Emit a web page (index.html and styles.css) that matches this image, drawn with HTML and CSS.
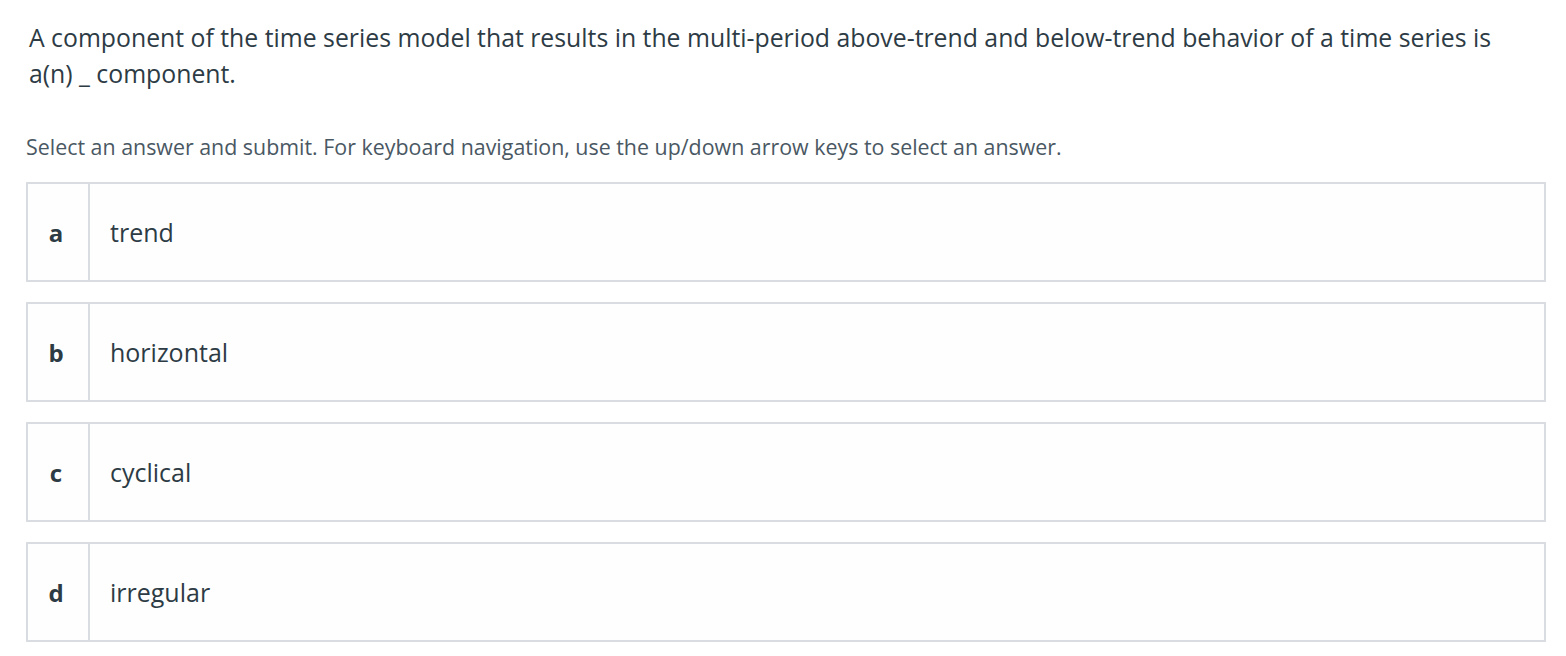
FILE: index.html
```html
<!DOCTYPE html>
<html lang="en">
<head>
<meta charset="utf-8">
<title>Question</title>
<link rel="stylesheet" href="styles.css">
</head>
<body>
<main class="quiz">
  <p class="question">A component of the time series model that results in the multi-period above-trend and below-trend behavior of a time series is a(n) _ component.</p>
  <p class="instructions">Select an answer and submit. For keyboard navigation, use the up/down arrow keys to select an answer.</p>
  <ul class="options">
    <li class="option"><span class="letter">a</span><span class="text">trend</span></li>
    <li class="option"><span class="letter">b</span><span class="text">horizontal</span></li>
    <li class="option"><span class="letter">c</span><span class="text">cyclical</span></li>
    <li class="option"><span class="letter">d</span><span class="text">irregular</span></li>
  </ul>
</main>
</body>
</html>
```
FILE: styles.css
```css
html, body {
  margin: 0;
  padding: 0;
  background: #ffffff;
}
body {
  font-family: "Open Sans", "Noto Sans", sans-serif;
  color: #2d3b45;
}
.quiz {
  padding: 19px 20px 0 26px;
}
.question {
  margin: 0 0 0 3px;
  font-size: 24.8px;
  line-height: 36px;
  max-width: 1480px;
}
.instructions {
  margin: 42px 0 0 0;
  font-size: 21.4px;
  line-height: 28px;
  color: #4a5863;
}
.options {
  list-style: none;
  margin: 21px 0 0 0;
  padding: 0;
  display: flex;
  flex-direction: column;
  gap: 20px;
  width: 1520px;
}
.option {
  display: flex;
  height: 100px;
  box-sizing: border-box;
  border: 2px solid #d9dde1;
  background: #fefefe;
}
.letter {
  width: 62px;
  flex: none;
  box-sizing: border-box;
  padding-right: 4px;
  display: flex;
  align-items: center;
  justify-content: center;
  border-right: 2px solid #d9dde1;
  font-size: 24px;
  font-weight: 700;
}
.text {
  display: flex;
  align-items: center;
  padding-left: 20px;
  font-size: 25px;
}
```
